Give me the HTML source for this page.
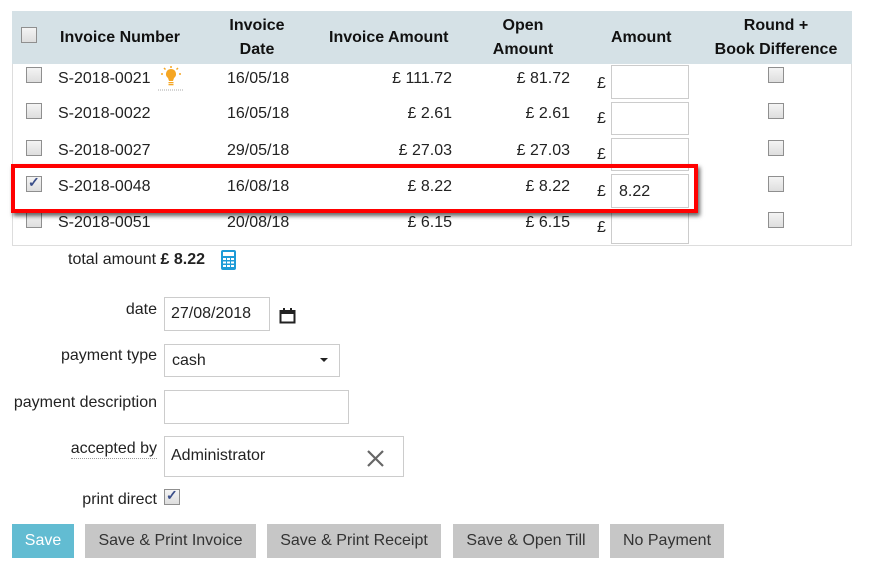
<!DOCTYPE html>
<html><head><meta charset="utf-8"><style>
*{box-sizing:border-box;margin:0;padding:0}
body{width:881px;height:575px;background:#fff;font-family:"Liberation Sans",Arial,sans-serif;font-size:16px;color:#222;position:relative;overflow:hidden}
.a{position:absolute;white-space:nowrap}
.hdr{position:absolute;left:12px;top:11px;width:840px;height:53px;background:#d5e1e6}
.tbl{position:absolute;left:12px;top:11px;width:840px;height:235px;border:1px solid #ddd}
.h{position:absolute;font-weight:bold;font-size:16px;color:#111;text-align:center;line-height:24px}
.cb{position:absolute;width:16px;height:16px;border:1px solid #8f8f8f;background:linear-gradient(#f4f4f4,#dedede)}
.in{position:absolute;border:1px solid #ccc;background:#fff}
.r{text-align:right}
.btn{position:absolute;top:524px;height:34px;background:#c6c6c6;color:#333;font-size:16px;line-height:34px;text-align:center}
.chk:after{content:"✓";position:absolute;left:1px;top:-3px;font-size:14px;color:#3b4f8a;font-weight:bold}
</style></head><body>
<div class="tbl"></div>
<div class="hdr"></div>
<div class="cb" style="left:21px;top:27px"></div>
<div class="h" style="left:60px;top:26px">Invoice Number</div>
<div class="h" style="left:222px;top:14px;width:70px">Invoice<br>Date</div>
<div class="h" style="left:329px;top:26px">Invoice Amount</div>
<div class="h" style="left:480px;top:14px;width:86px">Open<br>Amount</div>
<div class="h" style="left:611px;top:26px">Amount</div>
<div class="h" style="left:700px;top:14px;width:152px">Round +<br>Book Difference</div>

<div class="cb" style="left:26px;top:67px"></div>
<div class="cb" style="left:26px;top:103px"></div>
<div class="cb" style="left:26px;top:140px"></div>
<div class="cb chk" style="left:26px;top:176px"></div>
<div class="cb" style="left:26px;top:212px"></div>
<div class="a" style="left:58px;top:70px">S-2018-0021</div>
<div class="a" style="left:58px;top:105px">S-2018-0022</div>
<div class="a" style="left:58px;top:142px">S-2018-0027</div>
<div class="a" style="left:58px;top:178px">S-2018-0048</div>
<div class="a" style="left:58px;top:214px">S-2018-0051</div>
<svg class="a" style="left:158px;top:65px" width="26" height="26" viewBox="0 0 26 26"><g stroke="#f5a623" stroke-width="1.5"><line x1="13" y1="1" x2="13" y2="3"/><line x1="6" y1="3" x2="7.5" y2="4.5"/><line x1="20" y1="3" x2="18.5" y2="4.5"/><line x1="3" y1="9" x2="5" y2="9"/><line x1="21" y1="9" x2="23" y2="9"/></g><path d="M13 4a5 5 0 0 0-3 9l1 3h4l1-3a5 5 0 0 0-3-9z" fill="#f5a623"/><rect x="10.5" y="17" width="5" height="1.3" fill="#f5a623"/><rect x="10.5" y="19" width="5" height="1.3" fill="#f5a623"/><line x1="0" y1="25" x2="26" y2="25" stroke="#aaa" stroke-dasharray="1,1"/></svg>
<div class="a" style="left:227px;top:70px">16/05/18</div>
<div class="a" style="left:227px;top:105px">16/05/18</div>
<div class="a" style="left:227px;top:142px">29/05/18</div>
<div class="a" style="left:227px;top:178px">16/08/18</div>
<div class="a" style="left:227px;top:214px">20/08/18</div>
<div class="a r" style="right:429px;top:70px">£ 111.72</div>
<div class="a r" style="right:429px;top:105px">£ 2.61</div>
<div class="a r" style="right:429px;top:142px">£ 27.03</div>
<div class="a r" style="right:429px;top:178px">£ 8.22</div>
<div class="a r" style="right:429px;top:214px">£ 6.15</div>
<div class="a r" style="right:311px;top:70px">£ 81.72</div>
<div class="a r" style="right:311px;top:105px">£ 2.61</div>
<div class="a r" style="right:311px;top:142px">£ 27.03</div>
<div class="a r" style="right:311px;top:178px">£ 8.22</div>
<div class="a r" style="right:311px;top:214px">£ 6.15</div>
<div class="a" style="left:597px;top:75px">£</div>
<div class="a" style="left:597px;top:110px">£</div>
<div class="a" style="left:597px;top:146px">£</div>
<div class="a" style="left:597px;top:183px">£</div>
<div class="a" style="left:597px;top:219px">£</div>
<div class="in" style="left:611px;top:65px;width:78px;height:34px"></div>
<div class="in" style="left:611px;top:102px;width:78px;height:33px"></div>
<div class="in" style="left:611px;top:138px;width:78px;height:33px"></div>
<div class="in" style="left:611px;top:174px;width:78px;height:34px;padding:8px 7px">8.22</div>
<div class="in" style="left:611px;top:210px;width:78px;height:34px"></div>
<div class="cb" style="left:768px;top:67px"></div>
<div class="cb" style="left:768px;top:103px"></div>
<div class="cb" style="left:768px;top:140px"></div>
<div class="cb" style="left:768px;top:176px"></div>
<div class="cb" style="left:768px;top:212px"></div>
<div class="a" style="left:11px;top:164px;width:687px;height:49px;border:4px solid #f00;box-shadow:2px 3px 4px rgba(0,0,0,.6)"></div>

<div class="a" style="left:68px;top:251px">total amount <b>£ 8.22</b></div>
<svg class="a" style="left:220px;top:249px" width="17" height="22" viewBox="0 0 17 22"><rect x="1" y="1" width="15" height="20" rx="2" fill="#1e9bd7"/><rect x="3" y="3" width="11" height="4" fill="#fff"/><g fill="#fff"><rect x="3" y="9" width="3" height="2"/><rect x="7" y="9" width="3" height="2"/><rect x="11" y="9" width="3" height="2"/><rect x="3" y="12.5" width="3" height="2"/><rect x="7" y="12.5" width="3" height="2"/><rect x="11" y="12.5" width="3" height="2"/><rect x="3" y="16" width="3" height="2"/><rect x="7" y="16" width="3" height="2"/><rect x="11" y="16" width="3" height="2"/></g></svg>

<div class="a r" style="right:724px;top:301px">date</div>
<div class="in" style="left:164px;top:297px;width:106px;height:34px;padding:7px 6px">27/08/2018</div>
<svg class="a" style="left:279px;top:307px" width="17" height="17" viewBox="0 0 17 17"><rect x="1.5" y="4" width="14" height="11.5" fill="none" stroke="#222" stroke-width="2"/><rect x="1" y="3" width="15" height="4" fill="#222"/><rect x="4" y="1" width="2" height="4" fill="#222"/><rect x="11" y="1" width="2" height="4" fill="#222"/></svg>
<div class="a r" style="right:724px;top:347px">payment type</div>
<div class="in" style="left:164px;top:344px;width:176px;height:33px;padding:7px 7px">cash</div>
<div class="a" style="left:320px;top:358px;width:0;height:0;border-left:4px solid transparent;border-right:4px solid transparent;border-top:4px solid #222"></div>
<div class="a r" style="right:724px;top:394px">payment description</div>
<div class="in" style="left:164px;top:390px;width:185px;height:34px"></div>
<div class="a r" style="right:724px;top:440px;border-bottom:1px dotted #999">accepted by</div>
<div class="in" style="left:164px;top:436px;width:240px;height:41px;padding:10px 6px">Administrator</div>
<svg class="a" style="left:366px;top:449px" width="19" height="19" viewBox="0 0 19 19"><path d="M2 2L17 17M17 2L2 17" stroke="#666" stroke-width="2.2"/></svg>
<div class="a r" style="right:724px;top:491px">print direct</div>
<div class="cb chk" style="left:164px;top:489px"></div>

<div class="btn" style="left:12px;width:62px;background:#62bcd2;color:#fff">Save</div>
<div class="btn" style="left:85px;width:171px">Save &amp; Print Invoice</div>
<div class="btn" style="left:267px;width:174px">Save &amp; Print Receipt</div>
<div class="btn" style="left:453px;width:146px">Save &amp; Open Till</div>
<div class="btn" style="left:610px;width:114px">No Payment</div>
</body></html>
